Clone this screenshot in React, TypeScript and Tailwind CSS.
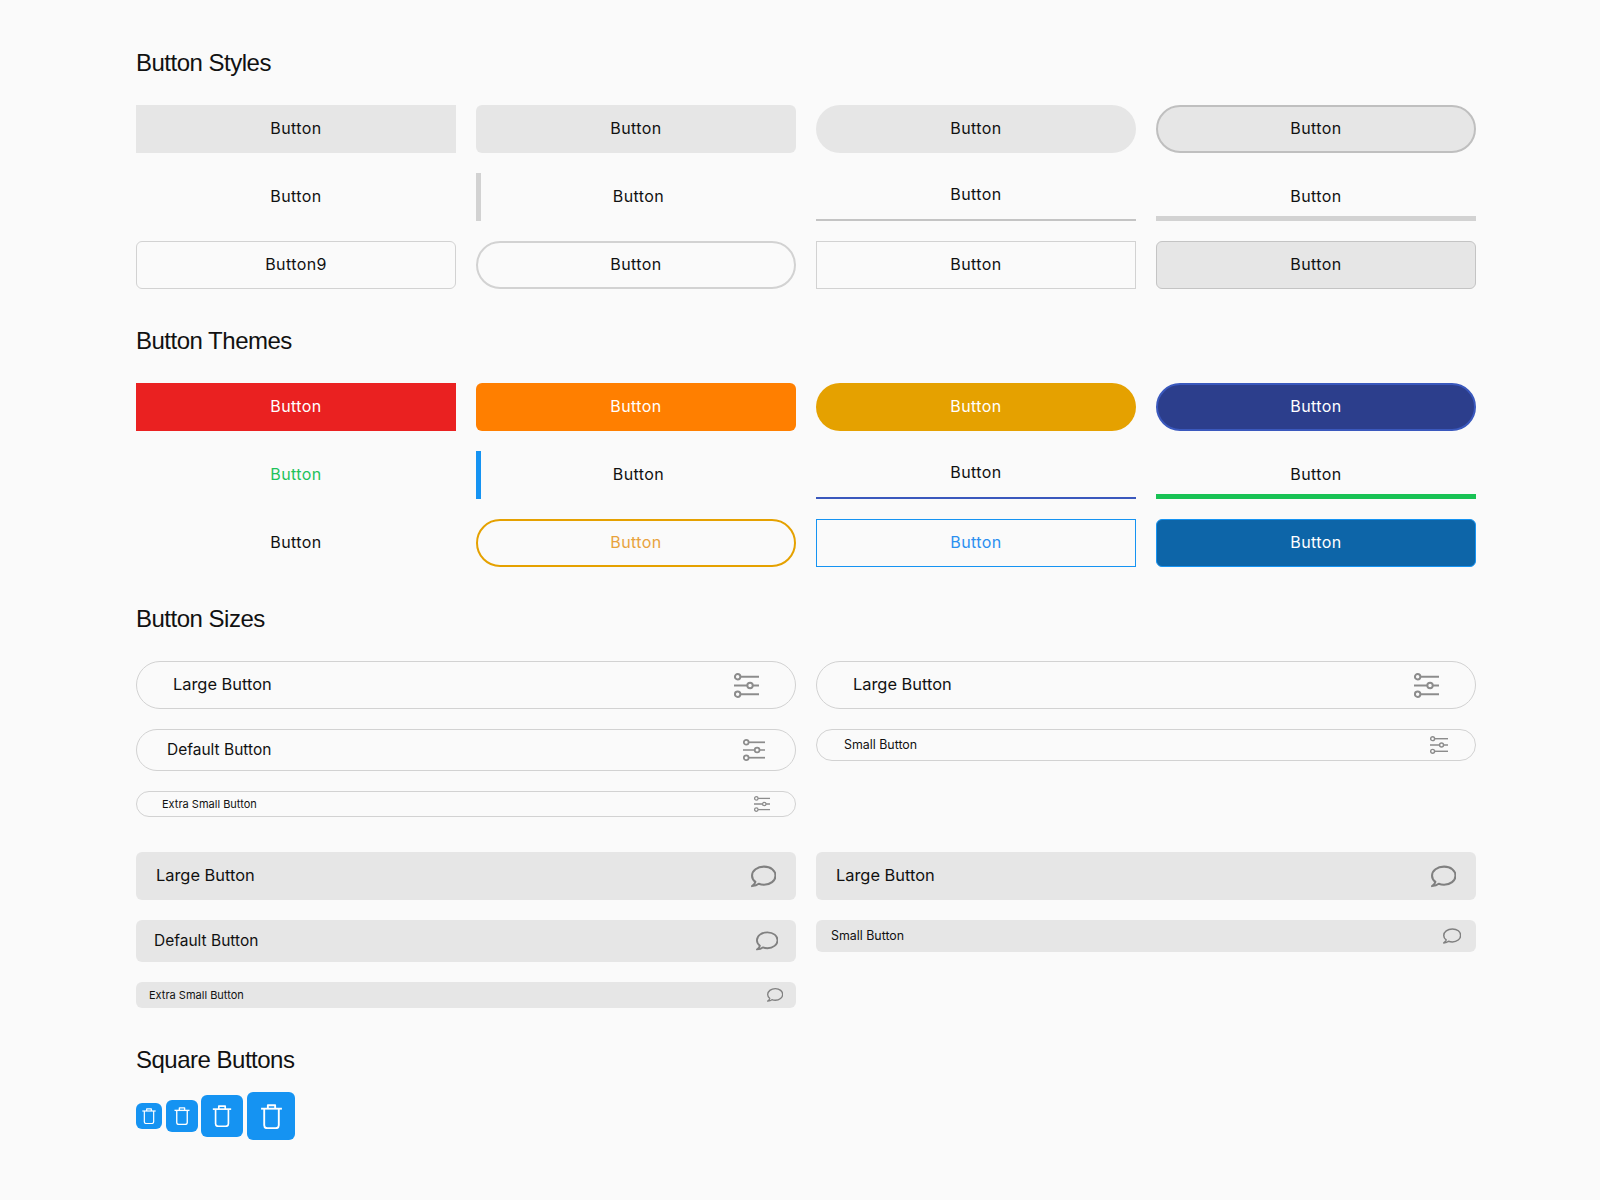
import React from 'react';

const btn = "flex items-center justify-center h-12 box-border pb-[2px] text-[16px] tracking-[0.4px] text-[#111111]";

function Sliders({ size }: { size: number }) {
  return (
    <svg width={size} height={size} viewBox="0 0 24 24" fill="none" stroke="#8c8c8c" strokeWidth="1.9">
      <path d="M6.1 3.6H24" />
      <circle cx="3.5" cy="3.6" r="2.6" />
      <path d="M0 12H12.8M18 12H24" />
      <circle cx="15.4" cy="12" r="2.6" />
      <path d="M6.1 20.4H24" />
      <circle cx="3.5" cy="20.4" r="2.6" />
    </svg>
  );
}

function Chat({ size }: { size: number }) {
  return (
    <svg width={size} height={size} viewBox="0 0 24 24" fill="none" stroke="#808080" strokeWidth="2">
      <path d="M4.2 17.2C2.2 15.6 1 13.5 1 11.2 1 6.4 6 2.5 12.5 2.5S23.5 6.4 23.5 11.2 18.5 19.9 12.5 19.9C10.6 19.9 8.9 19.6 7.4 19 5.8 20.3 3.6 21 1 21.2 2.7 20.2 3.9 18.8 4.2 17.2Z" strokeLinejoin="round" />
    </svg>
  );
}

function Trash({ size }: { size: number }) {
  return (
    <svg width={size} height={size} viewBox="0 0 24 24" fill="none" stroke="#ffffff" strokeWidth="1.8" strokeLinejoin="round">
      <path d="M2 4.5H22" />
      <path d="M8.5 4.5V1.2H15.5V4.5" />
      <path d="M5 4.5V20.5C5 22.5 6 23.3 8 23.3H16C18 23.3 19 22.5 19 20.5V4.5" />
    </svg>
  );
}

function Title({ children }: { children: React.ReactNode }) {
  return <h2 className="h-[36px] flex items-center text-[24px] leading-none tracking-[-0.5px] text-[#111111] font-['Liberation_Sans',sans-serif]">{children}</h2>;
}

function SizeBtn({ className, label, icon }: { className: string; label: string; icon: React.ReactNode }) {
  return (
    <div className={"flex items-center justify-between box-border text-[#111111] " + className}>
      <span>{label}</span>
      {icon}
    </div>
  );
}

export default function App() {
  return (
    <div className="min-h-[1200px] bg-[#fafafa] pl-[136px] pt-[45px] font-['Inter',sans-serif]">
      <div className="w-[1340px]">
        <Title>Button Styles</Title>
        <div className="grid grid-cols-4 gap-5 mt-6">
          <div className={btn + " bg-[#e6e6e6]"}>Button</div>
          <div className={btn + " bg-[#e6e6e6] rounded-md"}>Button</div>
          <div className={btn + " bg-[#e6e6e6] rounded-full"}>Button</div>
          <div className={btn + " bg-[#e6e6e6] rounded-full border-2 border-[#bfbfbf]"}>Button</div>
          <div className={btn}>Button</div>
          <div className={btn + " border-l-[5px] border-[#d2d2d2]"}>Button</div>
          <div className={btn + " border-b-2 border-[#c4c4c4] !pb-[4px]"}>Button</div>
          <div className={btn + " border-b-[5px] border-[#d2d2d2] pt-[5px]"}>Button</div>
          <div className={btn + " border border-[#d2d2d2] rounded-md"}>Button9</div>
          <div className={btn + " border-2 border-[#d2d2d2] rounded-full"}>Button</div>
          <div className={btn + " border border-[#d2d2d2]"}>Button</div>
          <div className={btn + " bg-[#e6e6e6] border border-[#c4c4c4] rounded-md"}>Button</div>
        </div>

        <div className="mt-[34px]">
          <Title>Button Themes</Title>
        </div>
        <div className="grid grid-cols-4 gap-5 mt-6">
          <div className={btn + " bg-[#ea2121] !text-white"}>Button</div>
          <div className={btn + " bg-[#ff7f00] rounded-md !text-white"}>Button</div>
          <div className={btn + " bg-[#e5a100] rounded-full !text-white"}>Button</div>
          <div className={btn + " bg-[#2c3e8c] rounded-full border-2 border-[#3a58bd] !text-white"}>Button</div>
          <div className={btn + " !text-[#1fc25a]"}>Button</div>
          <div className={btn + " border-l-[5px] border-[#1593f2]"}>Button</div>
          <div className={btn + " border-b-2 border-[#3a58bd] !pb-[4px]"}>Button</div>
          <div className={btn + " border-b-[5px] border-[#18c254] pt-[5px]"}>Button</div>
          <div className={btn}>Button</div>
          <div className={btn + " border-2 border-[#e5a100] rounded-full !text-[#e8a23c]"}>Button</div>
          <div className={btn + " border border-[#1593f2] !text-[#2a8ff0]"}>Button</div>
          <div className={btn + " bg-[#0d65a8] border border-[#1593f2] rounded-md !text-white"}>Button</div>
        </div>

        <div className="mt-[34px]">
          <Title>Button Sizes</Title>
        </div>
        <div className="grid grid-cols-2 gap-5 items-start mt-6">
          <div className="flex flex-col gap-5">
            <SizeBtn className="h-12 pl-9 pr-9 text-[16.4px] rounded-full border border-[#d2d2d2] [&>span]:-mt-[2px]" label="Large Button" icon={<Sliders size={25} />} />
            <SizeBtn className="h-[42px] pl-[30px] pr-[30px] text-[15.5px] rounded-full border border-[#d2d2d2]" label="Default Button" icon={<Sliders size={22} />} />
            <SizeBtn className="h-[26px] pl-[25px] pr-[25px] text-[11px] rounded-full border border-[#d2d2d2]" label="Extra Small Button" icon={<Sliders size={16} />} />
          </div>
          <div className="flex flex-col gap-5">
            <SizeBtn className="h-12 pl-9 pr-9 text-[16.4px] rounded-full border border-[#d2d2d2] [&>span]:-mt-[2px]" label="Large Button" icon={<Sliders size={25} />} />
            <SizeBtn className="h-8 pl-[27px] pr-[27px] text-[12.4px] rounded-full border border-[#d2d2d2]" label="Small Button" icon={<Sliders size={18} />} />
          </div>
        </div>

        <div className="grid grid-cols-2 gap-5 items-start mt-[35px]">
          <div className="flex flex-col gap-5">
            <SizeBtn className="h-12 pl-5 pr-5 text-[16.4px] rounded-md bg-[#e6e6e6] [&>span]:-mt-[2px]" label="Large Button" icon={<Chat size={25} />} />
            <SizeBtn className="h-[42px] pl-[18px] pr-[18px] text-[15.5px] rounded-md bg-[#e6e6e6]" label="Default Button" icon={<Chat size={22} />} />
            <SizeBtn className="h-[26px] pl-[13px] pr-[13px] text-[11px] rounded-md bg-[#e6e6e6]" label="Extra Small Button" icon={<Chat size={16} />} />
          </div>
          <div className="flex flex-col gap-5">
            <SizeBtn className="h-12 pl-5 pr-5 text-[16.4px] rounded-md bg-[#e6e6e6] [&>span]:-mt-[2px]" label="Large Button" icon={<Chat size={25} />} />
            <SizeBtn className="h-8 pl-[15px] pr-[15px] text-[12.4px] rounded-md bg-[#e6e6e6]" label="Small Button" icon={<Chat size={18} />} />
          </div>
        </div>

        <div className="mt-[34px]">
          <Title>Square Buttons</Title>
        </div>
        <div className="flex items-center gap-1 mt-[14px]">
          <div className="w-[26px] h-[26px] rounded-md bg-[#1593f2] flex items-center justify-center"><Trash size={16} /></div>
          <div className="w-8 h-8 rounded-md bg-[#1593f2] flex items-center justify-center"><Trash size={18} /></div>
          <div className="w-[42px] h-[42px] rounded-md bg-[#1593f2] flex items-center justify-center -ml-[1px]"><Trash size={22} /></div>
          <div className="w-12 h-12 rounded-md bg-[#1593f2] flex items-center justify-center"><Trash size={25} /></div>
        </div>
      </div>
    </div>
  );
}
